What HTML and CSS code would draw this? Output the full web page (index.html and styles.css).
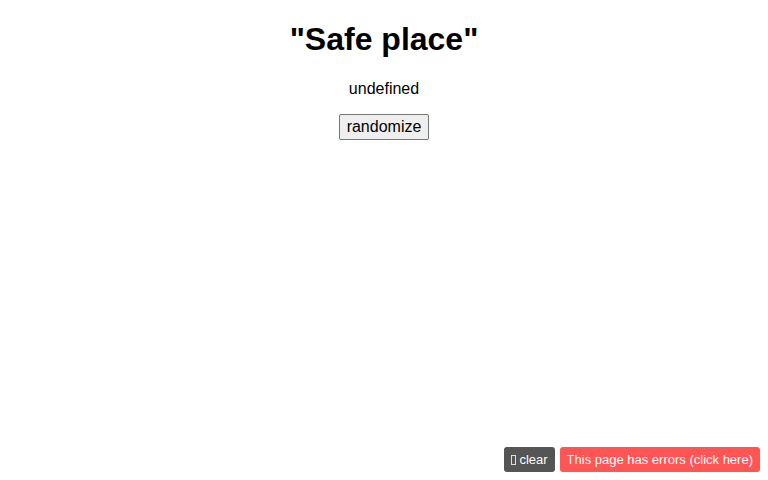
FILE: index.html
```html
<!DOCTYPE html>
<html>
<head>
<meta charset="utf-8">
<link rel="stylesheet" href="styles.css">
</head>
<body>
<div class="app">
  <h1 class="title">"Safe place"</h1>
  <p class="value">undefined</p>
  <div class="actions"><button class="rand">randomize</button></div>
</div>
<div class="overlay">
  <button class="btn clear"><span class="tofu"></span> clear</button>
  <button class="btn errors">This page has errors (click here)</button>
</div>
</body>
</html>
```
FILE: styles.css
```css
html, body {
  margin: 0;
  padding: 0;
  background: #fff;
}
body {
  font-family: "Liberation Sans", Arial, sans-serif;
  color: #000;
}
.app {
  text-align: center;
  display: flow-root;
}
.title {
  font-size: 32px;
  font-weight: bold;
  margin: 21.44px 0;
  line-height: 37px;
}
.value {
  font-size: 16px;
  line-height: 18px;
  margin: 16px 0;
}
.actions {
  margin: 16px 0;
}
.rand {
  font-family: "Liberation Sans", Arial, sans-serif;
  font-size: 16px;
  line-height: 18px;
  padding: 3px 7px;
  border: 1px solid #767676;
  border-radius: 2px;
  background: #efefef;
  color: #000;
}
.overlay {
  position: fixed;
  right: 8px;
  bottom: 8px;
  display: flex;
  gap: 5px;
}
.btn {
  font-family: "Liberation Sans", Arial, sans-serif;
  font-size: 13px;
  line-height: 15px;
  height: 25px;
  padding: 5px 7px;
  border: none;
  border-radius: 3px;
  color: #fff;
}
.clear {
  background: #555;
}
.errors {
  background: #f55;
}
.tofu {
  display: inline-block;
  width: 3px;
  height: 8px;
  border: 1px solid #ddd;
  vertical-align: -1px;
}
```
